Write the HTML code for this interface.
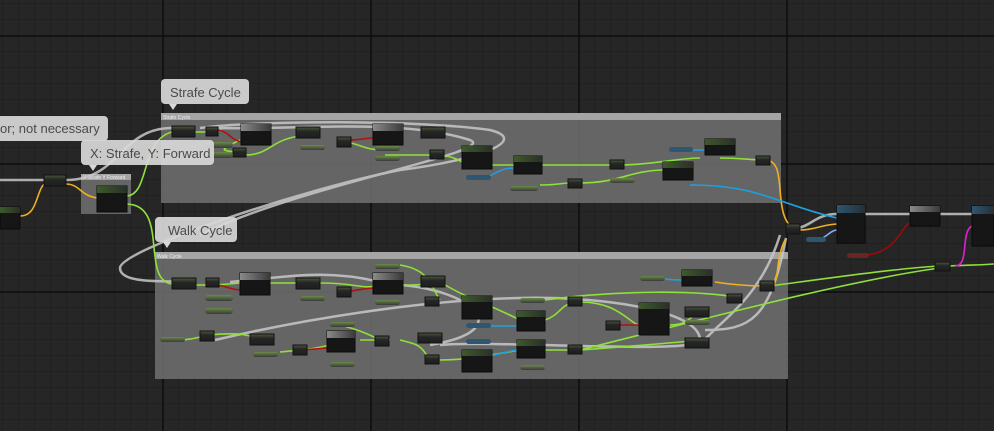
<!DOCTYPE html>
<html><head><style>
html,body{margin:0;padding:0;background:#262626;overflow:hidden}
svg{display:block}
text{font-family:"Liberation Sans",sans-serif}
</style></head><body>
<svg width="994" height="431" viewBox="0 0 994 431" xmlns="http://www.w3.org/2000/svg">
<defs>
<pattern id="g" width="16" height="16" patternUnits="userSpaceOnUse" x="3" y="4">
<path d="M16 0V16M0 16H16" stroke="#1c1c1c" stroke-width="1" fill="none"/>
</pattern>
<linearGradient id="hg" x1="0" x2="1" y1="0" y2="0"><stop offset="0" stop-color="#3d5a2c"/><stop offset="1" stop-color="#2a2f27"/></linearGradient>
<linearGradient id="hb" x1="0" x2="1"><stop offset="0" stop-color="#2f5670"/><stop offset="1" stop-color="#233038"/></linearGradient>
<linearGradient id="hw" x1="0" x2="1"><stop offset="0" stop-color="#8a8a8a"/><stop offset="1" stop-color="#3a3a3a"/></linearGradient>
<linearGradient id="pg" x1="0" x2="0" y1="0" y2="1"><stop offset="0" stop-color="#6b8a48"/><stop offset="1" stop-color="#3a3a3a"/></linearGradient>
<linearGradient id="cn" x1="0" x2="0" y1="0" y2="1"><stop offset="0" stop-color="#4a5a3a"/><stop offset="0.4" stop-color="#262626"/><stop offset="1" stop-color="#1e1e1e"/></linearGradient>
</defs>
<rect width="994" height="431" fill="#262626"/>
<rect width="994" height="431" fill="url(#g)"/>
<g stroke="#0d0d0d" stroke-width="1.5">
<path d="M163 0V431M371 0V431M579 0V431M787 0V431"/>
<path d="M0 36H994M0 164H994M0 292H994"/>
</g>
<rect x="161" y="113" width="620" height="90" fill="#6e6e6e" fill-opacity="0.88"/>
<rect x="161" y="113" width="620" height="7" fill="#a5a5a5"/>
<rect x="155" y="252" width="633" height="127" fill="#6e6e6e" fill-opacity="0.88"/>
<rect x="155" y="252" width="633" height="7" fill="#a5a5a5"/>
<rect x="81" y="174" width="50" height="40" fill="#6e6e6e" fill-opacity="0.88"/>
<rect x="81" y="174" width="50" height="6" fill="#a5a5a5"/>
<g fill="#eee" font-size="5"><text x="163" y="119">Strafe Cycle</text><text x="157" y="258">Walk Cycle</text><text x="83" y="179">X Strafe Y Forward</text></g>
<g fill="none" stroke="#c8c8c8" stroke-width="2.5" opacity="0.85">
<path d="M0 180 C40 180 40 180 60 180"/>
<path d="M66 180 C120 180 120 128 172 128"/>
<path d="M200 128 C260 120 420 120 490 130 C530 140 480 160 400 170 C300 190 120 250 120 268 C120 285 170 280 180 282"/>
<path d="M215 128 C300 130 400 118 470 140 C500 152 300 185 200 235"/>
<path d="M230 282 C300 275 330 270 380 282"/>
<path d="M215 340 C300 320 420 300 520 298 C600 296 700 310 700 340 C700 355 500 340 440 345"/>
<path d="M400 285 C470 290 520 330 430 345"/>
<path d="M865 214 C880 214 890 214 910 214"/>
<path d="M940 214 C955 214 960 214 972 214"/>
<path d="M795 228 C810 228 815 214 837 214"/>
<path d="M780 235 C760 300 720 320 700 345"/>
<path d="M786 238 C770 320 750 330 705 330"/>
</g>
<g fill="none" stroke="#8ee03a" stroke-width="1.6">
<path d="M126 196 C150 196 140 140 172 132"/>
<path d="M126 204 C170 204 140 280 172 284"/>
<path d="M195 132 C210 132 210 132 222 130"/>
<path d="M240 140 C220 150 220 150 235 152"/>
<path d="M245 155 C270 155 270 140 300 136"/>
<path d="M340 142 C360 142 360 150 385 150"/>
<path d="M385 155 C410 155 410 155 430 155"/>
<path d="M440 155 C460 158 455 160 470 165"/>
<path d="M490 165 C505 165 505 165 515 165"/>
<path d="M540 165 C570 165 580 165 610 165"/>
<path d="M540 185 C560 185 560 183 570 183"/>
<path d="M580 183 C620 183 630 170 665 170"/>
<path d="M620 165 C650 165 680 158 700 158"/>
<path d="M720 158 C740 158 750 160 765 160"/>
<path d="M195 285 C215 285 220 285 240 283"/>
<path d="M270 283 C290 283 290 283 300 283"/>
<path d="M320 283 C360 283 360 290 380 285"/>
<path d="M400 285 C420 285 420 285 430 282"/>
<path d="M440 282 C470 300 480 300 520 320"/>
<path d="M400 265 C430 270 430 285 440 300"/>
<path d="M545 320 C560 315 560 305 575 302"/>
<path d="M580 302 C620 302 630 325 640 325"/>
<path d="M670 325 C690 325 690 315 700 312"/>
<path d="M210 335 C240 332 250 335 260 340"/>
<path d="M280 352 C300 350 310 350 330 345"/>
<path d="M360 340 C380 340 380 340 390 340"/>
<path d="M400 340 C420 345 420 345 430 360"/>
<path d="M440 360 C470 360 490 355 520 350"/>
<path d="M545 350 C560 350 560 350 570 350"/>
<path d="M580 350 C650 345 700 340 705 340"/>
<path d="M545 300 C620 290 700 290 740 298"/>
<path d="M770 286 C830 278 900 268 940 266"/>
<path d="M580 350 C700 320 850 280 940 268"/>
<path d="M950 266 C970 265 980 265 994 264"/>
<path d="M175 340 C190 340 195 338 205 336"/>
<path d="M340 325 C360 330 370 335 380 340"/>
</g>
<g fill="none" stroke="#f0b020" stroke-width="1.6">
<path d="M20 216 C40 216 35 185 48 182"/>
<path d="M66 184 C80 184 80 196 98 198"/>
<path d="M765 160 C790 160 770 215 795 230"/>
<path d="M800 230 C815 230 820 225 837 224"/>
<path d="M785 240 C775 260 780 280 772 286"/>
<path d="M715 282 C740 286 760 286 768 286"/>
</g>
<g fill="none" stroke="#1ea0e0" stroke-width="1.6">
<path d="M690 150 C700 150 700 150 708 150"/>
<path d="M490 176 C500 170 505 168 515 168"/>
<path d="M690 185 C760 185 780 205 837 218"/>
<path d="M660 278 C670 280 675 280 685 280"/>
<path d="M490 326 C500 326 505 326 517 326"/>
<path d="M490 356 C500 354 505 352 517 350"/>
</g>
<path d="M815 240 C825 240 830 230 837 230" stroke="#8ca8f0" stroke-width="1.6" fill="none"/>
<path d="M868 255 C900 250 900 225 912 222" stroke="#9a0a0a" stroke-width="1.6" fill="none"/>
<path d="M955 266 C970 266 960 232 972 226" stroke="#e020d0" stroke-width="1.6" fill="none"/>
<g fill="none" stroke="#b01010" stroke-width="1.6">
<path d="M218 130 C230 132 230 140 242 142"/>
<path d="M350 140 C360 140 365 138 375 138"/>
<path d="M215 285 C225 285 230 290 242 290"/>
<path d="M345 292 C360 290 365 288 375 288"/>
<path d="M610 325 C620 325 625 325 640 325"/>
<path d="M300 350 C310 350 320 348 330 348"/>
</g>
<g>
<g fill="#161616" stroke="#0a0a0a">
<rect x="0" y="207" width="20" height="22"/>
<rect x="97" y="186" width="30" height="26"/>
<rect x="241" y="124" width="30" height="21"/>
<rect x="373" y="124" width="30" height="21"/>
<rect x="462" y="146" width="30" height="23"/>
<rect x="514" y="156" width="28" height="18"/>
<rect x="705" y="139" width="30" height="16"/>
<rect x="663" y="162" width="30" height="18"/>
<rect x="837" y="205" width="28" height="38"/>
<rect x="910" y="206" width="30" height="20"/>
<rect x="972" y="206" width="22" height="40"/>
<rect x="240" y="273" width="30" height="22"/>
<rect x="373" y="273" width="30" height="21"/>
<rect x="462" y="296" width="30" height="23"/>
<rect x="517" y="311" width="28" height="20"/>
<rect x="639" y="303" width="30" height="32"/>
<rect x="682" y="270" width="30" height="16"/>
<rect x="327" y="331" width="28" height="21"/>
<rect x="462" y="350" width="30" height="22"/>
<rect x="517" y="340" width="28" height="18"/>
</g>
<g fill="url(#hg)">
<rect x="0" y="207" width="20" height="6"/><rect x="97" y="186" width="30" height="7"/>
<rect x="462" y="146" width="30" height="6"/><rect x="514" y="156" width="28" height="6"/>
<rect x="705" y="139" width="30" height="6"/><rect x="663" y="162" width="30" height="6"/>
<rect x="462" y="296" width="30" height="6"/><rect x="517" y="311" width="28" height="6"/>
<rect x="639" y="303" width="30" height="6"/><rect x="682" y="270" width="30" height="6"/>
<rect x="462" y="350" width="30" height="6"/><rect x="517" y="340" width="28" height="6"/>
</g>
<g fill="url(#hw)">
<rect x="241" y="124" width="30" height="7"/><rect x="373" y="124" width="30" height="7"/>
<rect x="240" y="273" width="30" height="7"/><rect x="373" y="273" width="30" height="7"/>
<rect x="327" y="331" width="28" height="7"/><rect x="910" y="206" width="30" height="6"/>
</g>
<g fill="url(#hb)"><rect x="837" y="205" width="28" height="8"/><rect x="972" y="206" width="22" height="8"/></g>
<g fill="url(#cn)" stroke="#111">
<rect x="44" y="175" width="22" height="11"/>
<rect x="172" y="126" width="23" height="11"/>
<rect x="206" y="127" width="12" height="9"/>
<rect x="233" y="148" width="13" height="9"/>
<rect x="296" y="127" width="24" height="11"/>
<rect x="337" y="137" width="14" height="10"/>
<rect x="421" y="127" width="24" height="11"/>
<rect x="430" y="150" width="14" height="9"/>
<rect x="610" y="160" width="14" height="9"/>
<rect x="568" y="179" width="14" height="9"/>
<rect x="756" y="156" width="14" height="9"/>
<rect x="786" y="224" width="14" height="10"/>
<rect x="935" y="262" width="15" height="9"/>
<rect x="172" y="278" width="24" height="11"/>
<rect x="206" y="278" width="13" height="9"/>
<rect x="296" y="278" width="24" height="11"/>
<rect x="337" y="287" width="14" height="10"/>
<rect x="421" y="276" width="24" height="11"/>
<rect x="425" y="297" width="14" height="9"/>
<rect x="568" y="297" width="14" height="9"/>
<rect x="606" y="321" width="14" height="9"/>
<rect x="685" y="307" width="24" height="10"/>
<rect x="727" y="294" width="15" height="9"/>
<rect x="760" y="281" width="14" height="10"/>
<rect x="200" y="331" width="14" height="10"/>
<rect x="250" y="334" width="24" height="11"/>
<rect x="293" y="345" width="14" height="10"/>
<rect x="375" y="336" width="14" height="10"/>
<rect x="418" y="333" width="24" height="10"/>
<rect x="425" y="355" width="14" height="9"/>
<rect x="568" y="345" width="14" height="9"/>
<rect x="685" y="338" width="24" height="10"/>
</g>
<g fill="url(#pg)">
<rect x="205" y="142" width="28" height="6" rx="3"/><rect x="205" y="152" width="28" height="6" rx="3"/>
<rect x="300" y="145" width="25" height="5" rx="2.5"/>
<rect x="375" y="146" width="25" height="5" rx="2.5"/><rect x="375" y="156" width="25" height="5" rx="2.5"/>
<rect x="510" y="186" width="28" height="5" rx="2.5"/><rect x="610" y="178" width="25" height="5" rx="2.5"/>
<rect x="205" y="295" width="28" height="6" rx="3"/><rect x="205" y="308" width="28" height="6" rx="3"/>
<rect x="300" y="296" width="25" height="5" rx="2.5"/>
<rect x="375" y="264" width="25" height="5" rx="2.5"/><rect x="375" y="300" width="25" height="5" rx="2.5"/>
<rect x="520" y="298" width="25" height="5" rx="2.5"/>
<rect x="160" y="337" width="25" height="5" rx="2.5"/><rect x="253" y="352" width="25" height="5" rx="2.5"/>
<rect x="330" y="322" width="25" height="5" rx="2.5"/><rect x="330" y="362" width="25" height="5" rx="2.5"/>
<rect x="520" y="365" width="25" height="5" rx="2.5"/>
<rect x="640" y="276" width="25" height="5" rx="2.5"/>
<rect x="685" y="320" width="25" height="5" rx="2.5"/>
</g>
<g fill="#2f5670"><rect x="466" y="175" width="25" height="5" rx="2.5"/><rect x="466" y="323" width="25" height="5" rx="2.5"/><rect x="466" y="339" width="25" height="5" rx="2.5"/><rect x="669" y="147" width="24" height="5" rx="2.5"/><rect x="806" y="237" width="20" height="5" rx="2.5"/></g>
<rect x="847" y="253" width="22" height="5" rx="2.5" fill="#6a2424"/>
</g>
<g font-size="13">
<rect x="-10" y="116" width="118" height="25" rx="4" fill="#d8d8d8" fill-opacity="0.92"/>
<text x="0" y="133" fill="#4a4a4a">or; not necessary</text>
<rect x="81" y="140" width="133" height="25" rx="4" fill="#d8d8d8" fill-opacity="0.92"/>
<path d="M89 165l4 6 4-6z" fill="#d8d8d8"/>
<text x="90" y="158" fill="#4a4a4a">X: Strafe, Y: Forward</text>
<rect x="161" y="79" width="88" height="25" rx="4" fill="#d8d8d8" fill-opacity="0.92"/>
<path d="M169 104l4 6 4-6z" fill="#d8d8d8"/>
<text x="170" y="97" fill="#4a4a4a">Strafe Cycle</text>
<rect x="155" y="217" width="82" height="25" rx="4" fill="#d8d8d8" fill-opacity="0.92"/>
<path d="M163 242l4 6 4-6z" fill="#d8d8d8"/>
<text x="168" y="235" fill="#4a4a4a">Walk Cycle</text>
</g>
</svg>
</body></html>
